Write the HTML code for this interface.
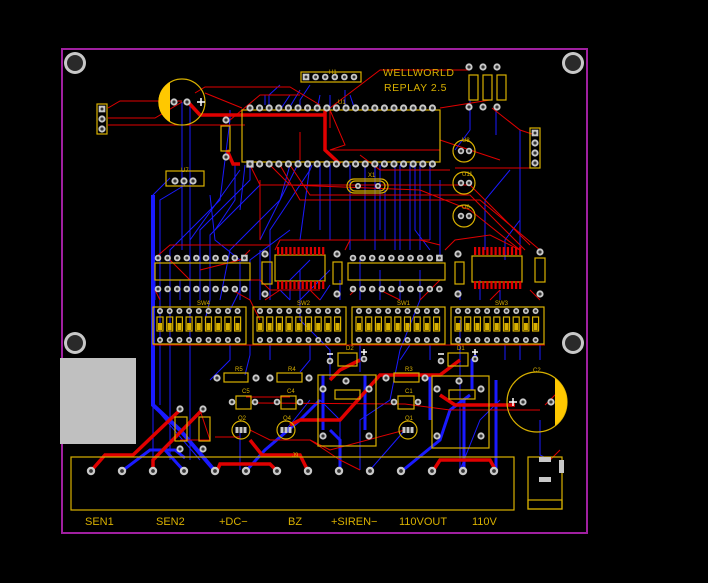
<!DOCTYPE html>
<html><head><meta charset="utf-8"><style>
html,body{margin:0;padding:0;background:#000;width:708px;height:583px;overflow:hidden}
svg{display:block}
text{font-family:"Liberation Sans",sans-serif;fill:#d8b000}
</style></head><body>
<svg id="s" width="708" height="583" viewBox="0 0 708 583" xmlns="http://www.w3.org/2000/svg">
<rect width="708" height="583" fill="#000"/>
<rect x="62" y="49" width="525" height="484" fill="none" stroke="#a020a0" stroke-width="2"/>
<g id="blue" stroke="#1a1aff" fill="none" stroke-width="1"></g>
<g id="red" stroke="#e00000" fill="none" stroke-width="1"></g>
<g id="yel" stroke="#d8b000" fill="none" stroke-width="1.2"></g>
<g id="pads"></g>
<rect x="60" y="358" width="76" height="86" fill="#c0c0c0"/>
<g font-size="11">
<text x="383" y="76" font-size="10.5" letter-spacing="0.5">WELLWORLD</text>
<text x="384" y="91" font-size="10.5" letter-spacing="0.5">REPLAY 2.5</text>
<text x="85" y="525">SEN1</text>
<text x="156" y="525">SEN2</text>
<text x="219" y="525">+DC−</text>
<text x="288" y="525">BZ</text>
<text x="331" y="525">+SIREN−</text>
<text x="399" y="525">110VOUT</text>
<text x="472" y="525">110V</text>
</g>
<g font-size="6">
<text x="329" y="74">H1</text><text x="338" y="104">U1</text><text x="181" y="172">U7</text>
<text x="368" y="177">X1</text><text x="462" y="142">U8</text><text x="462" y="176">U11</text><text x="462" y="209">U6</text>
<text x="197" y="305">SW4</text><text x="297" y="305">SW2</text><text x="397" y="305">SW1</text><text x="495" y="305">SW3</text>
<text x="346" y="350">D2</text><text x="457" y="350">D1</text><text x="533" y="372">C2</text>
<text x="235" y="371">R5</text><text x="288" y="371">R4</text><text x="405" y="371">R3</text>
<text x="242" y="393">C5</text><text x="287" y="393">C4</text><text x="405" y="393">C1</text>
<text x="238" y="420">Q2</text><text x="283" y="420">Q4</text><text x="405" y="420">Q1</text>
<text x="292" y="457">J9</text>
</g>
</svg>
<script>
var NS="http://www.w3.org/2000/svg";
function el(p,t,a){var e=document.createElementNS(NS,t);for(var k in a)e.setAttribute(k,a[k]);document.getElementById(p).appendChild(e);return e;}
function pad(x,y,r,sq){r=r||3.6;if(sq)el('pads','rect',{x:x-r,y:y-r,width:2*r,height:2*r,fill:'#c8c8c8'});else el('pads','circle',{cx:x,cy:y,r:r,fill:'#c8c8c8'});el('pads','circle',{cx:x,cy:y,r:r*0.45,fill:'#333'});}
function L(g,pts,w){el(g,'polyline',{points:pts,'stroke-width':w||1});}
function R(x,y,w,h,g){el(g||'yel','rect',{x:x,y:y,width:w,height:h});}
[[75,63],[573,63],[75,343],[573,343]].forEach(function(p){el('pads','circle',{cx:p[0],cy:p[1],r:11,fill:'#c8c8c8'});el('pads','circle',{cx:p[0],cy:p[1],r:8,fill:'#2a2a2a'});});
var B=[
"153,460 153,195 170,178","160,405 160,200 185,185","157,410 200,460","170,460 170,250 220,200 230,120","190,460 190,240 240,170",
"200,300 200,230 250,180 250,165","210,300 210,235 260,185","220,300 230,250 280,200 290,165","260,240 300,160","270,300 270,230 310,170 312,165",
"330,380 330,350 300,320 300,270","340,470 340,420 320,400","360,470 360,420 390,400 400,350 420,300","380,230 380,165","395,250 395,165","410,250 410,165","420,250 420,165",
"430,240 430,165","440,260 440,180","470,100 470,130 455,150","496,110 496,135","520,130 520,250","485,250 485,200 510,170",
"155,300 155,270","180,300 180,280","250,300 250,260 290,230","290,300 290,280 310,260","300,300 330,270","320,300 330,285",
"360,300 360,260","380,300 380,270","400,300 400,280","420,300 420,270","460,300 460,290","480,300 480,280","500,300 500,290",
"345,110 345,90","330,110 330,95","280,110 290,95","300,110 300,100 310,85","230,120 230,110","265,105 265,95",
"230,345 230,360 210,380","250,345 250,355 245,375","270,345 270,360","310,345 310,360 300,372","360,345 360,372","410,345 400,360","430,345 430,360",
"505,345 505,360","520,345 520,360","540,345 540,360","182,102 182,250","190,102 190,300","460,320 460,470","460,470 480,420 500,400",
"405,430 370,470","240,430 240,470","286,430 310,400","540,420 540,455 550,460","340,280 340,300","210,195 215,240 240,260",
"269,110 269,95 280,85","288,110 300,90","317,110 320,95","355,110 350,95","365,165 365,240","375,165 375,250","385,190 385,240","400,165 400,250",
"415,165 415,230 430,250","235,165 235,200 215,230","245,165 240,210","320,165 320,230","330,165 330,240","310,165 300,240","350,165 350,250","240,260 240,300",
"260,300 260,250","280,290 290,300","505,260 505,240 520,220","210,300 205,320","230,310 240,290"
];
B.forEach(function(p){L('blue',p,1);});
L('blue',"153,195 153,405 180,430 215,471",4);
L('blue',"122,471 150,450 175,450 185,458",3);
L('blue',"184,471 165,450",3);
L('blue',"246,471 265,450 300,420 320,400",3);
L('blue',"340,471 340,440 330,430",3);
L('blue',"402,471 440,440 450,410 470,395",3);
L('blue',"496,471 496,380",3);
L('blue',"464,471 464,400",3);
L('blue',"323,430 323,375",3);
L('blue',"365,430 365,375",3);
L('blue',"430,420 430,375",3);
L('blue',"472,390 472,360 476,355",3);
var Rd=[
"108,108 120,101 182,101","108,118 155,118 182,102","108,125 245,125","205,93 242,108","195,93 205,87 290,87 320,105","230,120 260,95 300,95",
"330,108 380,70 470,70","440,108 490,100","492,108 520,130 535,135","455,168 535,168","300,132 300,160","440,140 500,160","330,110 345,145 330,150 440,150",
"360,155 380,170 450,170","270,165 290,185 420,190 470,210 520,250","280,165 300,200 480,200 540,250","250,165 260,185 470,185 530,245","290,165 310,195 470,195 525,250",
"155,258 170,245 270,245","170,260 190,280 260,280 270,290 320,290","275,250 280,240 420,240 440,245","345,250 350,240 430,240","445,250 455,240 490,235 520,250",
"155,290 160,300","265,300 280,290","420,300 440,280","490,300 500,290","260,180 260,240","200,270 240,260 250,250",
"232,290 250,300 260,320","310,290 320,300","350,295 355,290","380,290 400,300","530,290 540,300","153,345 545,345",
"246,397 290,397","258,403 405,404 450,410 540,410","215,437 240,437","250,430 270,440 310,440 340,460 360,470","310,440 330,450 405,430",
"545,405 560,390","550,460 560,450","200,410 210,440 180,440","330,110 330,128"];
Rd.forEach(function(p){L('red',p,1);});
L('red',"187,101 200,115 325,115",3.5);L('red',"325,108 325,150 340,164",3.5);L('red',"227,150 233,164 240,164",3.5);
L('red',"91,471 105,455 133,455 180,410",3.5);L('red',"153,471 153,460 202,410",3.5);
L('red',"217,471 220,464 270,464 277,471",3.5);L('red',"250,440 262,455 300,455 308,471",3.5);
L('red',"290,425 300,420 340,420 380,375 440,375 460,360",3.5);L('red',"360,360 340,370 330,380",3.5);
L('red',"433,471 440,460 490,460 496,471",3.5);L('red',"440,395 455,405 515,405",3.5);
R(242,110,198,52);R(301,72,60,10);R(97,104,10,30);R(166,171,38,15);R(221,126,9,25);R(530,128,10,40);
R(469,75,9,25);R(483,75,9,25);R(497,75,9,25);
el('yel','rect',{x:347,y:179,width:41,height:14,rx:7});el('yel','rect',{x:350,y:181,width:35,height:10,rx:5});
[[464,151],[464,183],[464,216]].forEach(function(c){el('yel','circle',{cx:c[0],cy:c[1],r:11});});
el('yel','circle',{cx:182,cy:102,r:23});
el('pads','path',{d:"M170,82 A23,23 0 0 0 170,122 Z",fill:'#ffc800'});
el('yel','circle',{cx:537,cy:402,r:30});
el('pads','path',{d:"M555,378 A30,30 0 0 1 555,426 Z",fill:'#ffc800'});
R(155,263,95,17);R(275,255,50,26);R(348,263,97,17);R(472,256,50,26);
R(262,262,10,22);R(333,262,9,22);R(455,262,9,22);R(535,258,10,24);
[153,253,352,451].forEach(function(x){R(x,307,93,37);for(var i=0;i<9;i++){R(x+4+i*9.7,317,6,14);el('pads','rect',{x:x+5+i*9.7,y:323,width:4,height:7,fill:'#d8b000'});}});
R(338,353,19,13);R(448,353,20,13);R(224,373,24,9);R(277,373,25,9);R(394,373,25,9);
R(236,396,15,13);R(281,396,15,13);R(398,396,16,13);
[[241,430],[286,430],[408,430]].forEach(function(c){el('yel','circle',{cx:c[0],cy:c[1],r:9});});
R(318,375,58,71);R(432,376,57,72);R(335,390,25,9);R(449,390,26,9);
R(175,417,12,24);R(199,417,11,24);R(71,457,443,53);R(528,457,34,52);R(528,500,34,9);
[275,472].forEach(function(x){for(var i=0;i<12;i++){el('pads','rect',{x:x+2+i*4.1,y:247,width:2.2,height:8,fill:'#e00000'});el('pads','rect',{x:x+2+i*4.1,y:281,width:2.2,height:8,fill:'#e00000'});}});
for(var i=0;i<20;i++){pad(250+i*9.6,108);pad(250+i*9.6,164,3.6,i==0);}
for(var i=0;i<6;i++)pad(306+i*9.6,77,3.3,i==0);
pad(102,109,3.3,true);pad(102,119);pad(102,129);
pad(174,102);pad(187,102);pad(175,181);pad(184,181);pad(193,181);
pad(226,120);pad(226,157);pad(358,186,3);pad(378,186,3);
[[461,151],[469,151],[461,183],[469,183],[461,216],[469,216]].forEach(function(p){pad(p[0],p[1],3.2);});
pad(535,133,3.3,true);pad(535,143);pad(535,153);pad(535,163);
[469,483,497].forEach(function(x){pad(x,67);pad(x,107);});
for(var i=0;i<10;i++){pad(158+i*9.6,258,3.3,i==9);pad(158+i*9.6,289,3.3);pad(353+i*9.6,258,3.3,i==9);pad(353+i*9.6,289,3.3);}
pad(265,254);pad(265,294);pad(337,254);pad(337,294);pad(458,254);pad(458,294);pad(540,252);pad(540,294);
[153,253,352,451].forEach(function(x){for(var i=0;i<9;i++){pad(x+7+i*9.7,311,3);pad(x+7+i*9.7,340,3);}});
pad(330,361,3.3);pad(364,359,3.3);pad(441,361,3.3);pad(475,359,3.3);
pad(217,378);pad(256,378);pad(270,378);pad(309,378);pad(386,378);pad(425,378);
pad(232,402,3.3);pad(255,402,3.3);pad(277,402,3.3);pad(300,402,3.3);pad(394,402,3.3);pad(418,402,3.3);
[237,241,245,282,286,290,404,408,412].forEach(function(x){el('pads','rect',{x:x-1.5,y:427,width:3,height:6,fill:'#c8c8c8'});});
pad(346,381);pad(323,389);pad(369,389);pad(323,436);pad(369,436);
pad(459,381);pad(437,389);pad(481,389);pad(437,436);pad(481,436);
pad(523,402);pad(551,402);
pad(180,409);pad(180,449);pad(203,409);pad(203,449);
for(var i=0;i<14;i++)pad(91+i*31,471,4.2);
el('pads','rect',{x:539,y:457,width:12,height:5,fill:'#c8c8c8'});el('pads','rect',{x:539,y:477,width:12,height:5,fill:'#c8c8c8'});el('pads','rect',{x:559,y:460,width:5,height:13,fill:'#c8c8c8'});
el('pads','path',{d:"M197,102h8M201,98v8M509,402h8M513,398v8",stroke:'#fff','stroke-width':1.5});
el('pads','path',{d:"M327,354h6M438,354h6M361,352h6M364,349v6M472,352h6M475,349v6",stroke:'#fff','stroke-width':1.5});
</script>
</body></html>
